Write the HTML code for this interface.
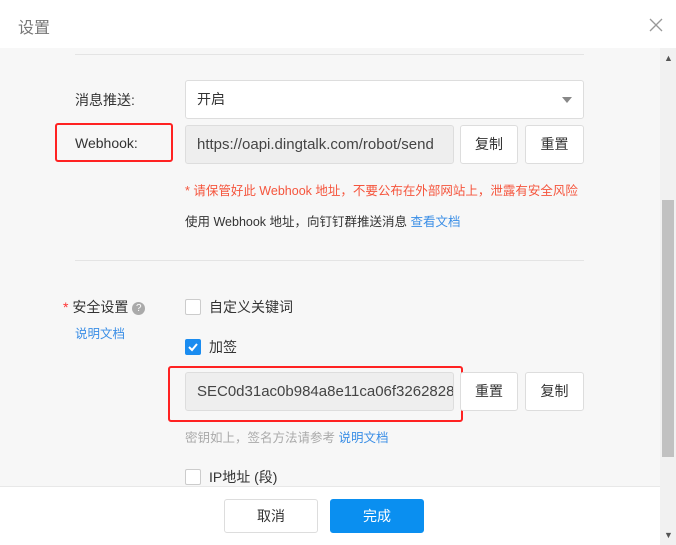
<!DOCTYPE html><html><head><meta charset="utf-8"><style>
*{box-sizing:border-box;margin:0;padding:0}
body{width:676px;height:545px;overflow:hidden;background:#fff;font-family:"Liberation Sans","Noto Sans CJK SC",sans-serif;font-size:13px;color:#333;position:relative}
.a{position:absolute}
.btn{position:absolute;background:#fff;border:1px solid #ddd;border-radius:3px;text-align:center;line-height:37px;font-size:14px;color:#333}
.cb{position:absolute;width:16px;height:16px;border:1px solid #ccc;background:#fff;border-radius:2px}
</style></head><body>
<div class="a" style="left:18px;top:14px;font-size:16px;color:#777">设置</div>
<svg class="a" style="left:649px;top:18px" width="14" height="14"><path d="M1 1L13 13M13 1L1 13" stroke="#999" stroke-width="1.3"/></svg>
<div class="a" style="left:0;top:48px;width:660px;height:438px;background:#f7f7f7"></div>
<div class="a" style="left:660px;top:48px;width:16px;height:497px;background:#f1f1f1"></div>
<div class="a" style="left:662px;top:200px;width:12px;height:257px;background:#c1c1c1"></div>
<div class="a" style="left:664px;top:53px;font-size:9px;color:#555">▲</div>
<div class="a" style="left:664px;top:530px;font-size:9px;color:#555">▼</div>
<div class="a" style="left:75px;top:54px;width:509px;height:1px;background:#e4e4e4"></div>
<div class="a" style="left:75px;top:90px;font-size:14px">消息推送:</div>
<div class="a" style="left:185px;top:80px;width:399px;height:39px;background:#fff;border:1px solid #ddd;border-radius:3px;padding-left:11px;line-height:37px;font-size:14px">开启</div>
<div class="a" style="left:562px;top:97px;width:0;height:0;border-left:5px solid transparent;border-right:5px solid transparent;border-top:6px solid #888"></div>
<div class="a" style="left:55px;top:123px;width:118px;height:39px;border:2px solid #f22;border-radius:3px"></div>
<div class="a" style="left:75px;top:135px;font-size:14px">Webhook:</div>
<div class="a" style="left:185px;top:125px;width:269px;height:39px;background:#eee;border:1px solid #ddd;border-radius:3px;padding-left:11px;line-height:37px;font-size:15px;color:#444;overflow:hidden;white-space:nowrap">https://oapi.dingtalk.com/robot/send</div>
<div class="btn" style="left:460px;top:125px;width:58px;height:39px">复制</div>
<div class="btn" style="left:525px;top:125px;width:59px;height:39px">重置</div>
<div class="a" style="left:185px;top:180px;color:#f5553d;font-size:12.5px">* 请保管好此 Webhook 地址，不要公布在外部网站上，泄露有安全风险</div>
<div class="a" style="left:185px;top:211px;font-size:12.5px">使用 Webhook 地址，向钉钉群推送消息 <span style="color:#3a8ee6">查看文档</span></div>
<div class="a" style="left:75px;top:260px;width:509px;height:1px;background:#e4e4e4"></div>
<div class="a" style="left:63px;top:297px;font-size:14px"><span style="color:#f33">*</span> 安全设置 <span style="display:inline-block;width:13px;height:13px;border-radius:50%;background:#aaa;color:#fff;font-size:10px;text-align:center;line-height:13px;vertical-align:1px">?</span></div>
<div class="a" style="left:75px;top:323px;color:#3a8ee6;font-size:12.5px">说明文档</div>
<div class="cb" style="left:185px;top:299px"></div>
<div class="a" style="left:209px;top:297px;font-size:14px">自定义关键词</div>
<div class="cb" style="left:185px;top:339px;background:#1a8cf0;border-color:#1a8cf0"><svg width="14" height="14" style="display:block"><path d="M3 7L6 10L11 4" stroke="#fff" stroke-width="2" fill="none"/></svg></div>
<div class="a" style="left:209px;top:337px;font-size:14px">加签</div>
<div class="a" style="left:168px;top:366px;width:295px;height:56px;border:2px solid #f22;border-radius:3px"></div>
<div class="a" style="left:185px;top:372px;width:269px;height:39px;background:#eee;border:1px solid #ddd;border-radius:3px;padding-left:11px;line-height:37px;font-size:15px;color:#444;overflow:hidden;white-space:nowrap">SEC0d31ac0b984a8e11ca06f3262828</div>
<div class="btn" style="left:460px;top:372px;width:58px;height:39px">重置</div>
<div class="btn" style="left:525px;top:372px;width:59px;height:39px">复制</div>
<div class="a" style="left:185px;top:427px;color:#aaa;font-size:12.5px">密钥如上，签名方法请参考 <span style="color:#3a8ee6">说明文档</span></div>
<div class="cb" style="left:185px;top:469px"></div>
<div class="a" style="left:209px;top:467px;font-size:14px">IP地址 (段)</div>
<div class="a" style="left:0;top:486px;width:660px;height:59px;background:#fff;border-top:1px solid #e8e8e8"></div>
<div class="btn" style="left:224px;top:499px;width:94px;height:34px;line-height:32px">取消</div>
<div class="btn" style="left:330px;top:499px;width:94px;height:34px;line-height:32px;background:#0a8ff0;border-color:#0a8ff0;color:#fff">完成</div>
</body></html>
